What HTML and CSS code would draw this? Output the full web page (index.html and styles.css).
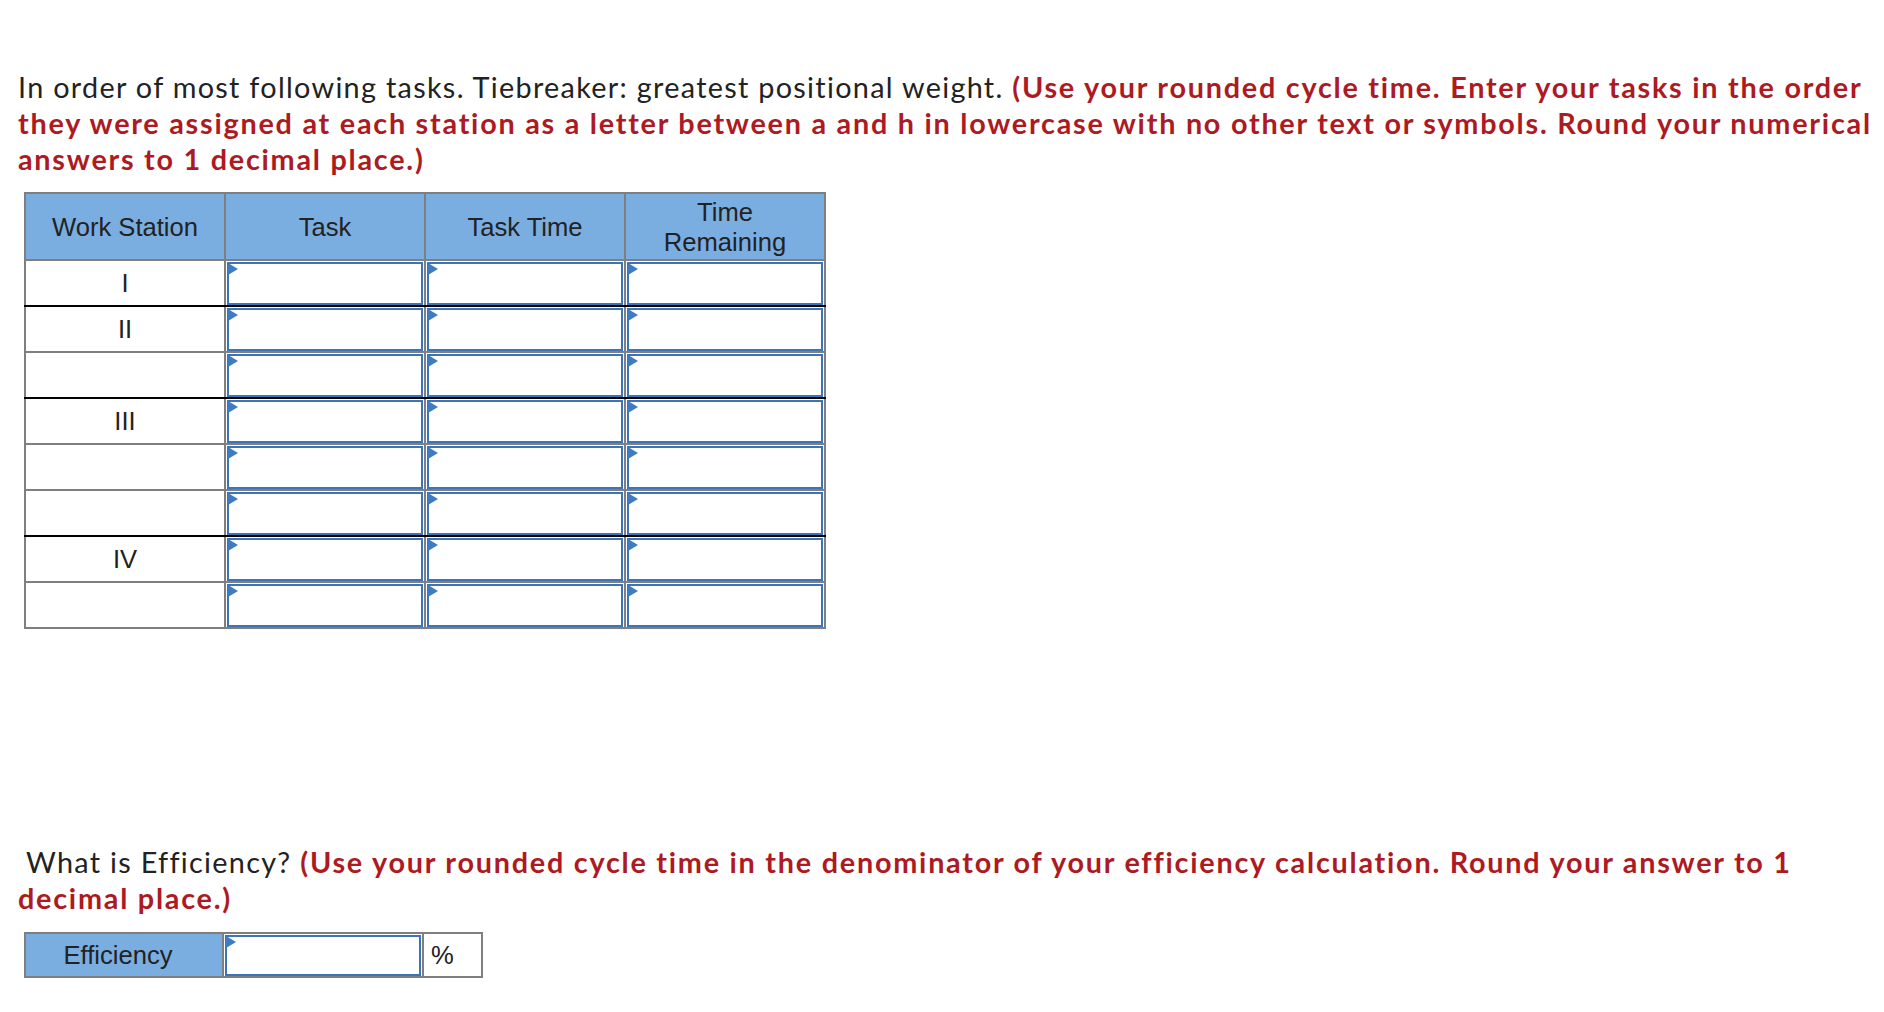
FILE: index.html
```html
<!DOCTYPE html>
<html lang="en">
<head>
<meta charset="utf-8">
<title>Line Balancing</title>
<link rel="stylesheet" href="styles.css">
</head>
<body>
<div class="page">
  <p class="prompt">In order of most following tasks. Tiebreaker: greatest positional weight. <strong class="note">(Use your rounded cycle time. Enter your tasks in the order they were assigned at each station as a letter between a and h in lowercase with no other text or symbols. Round your numerical answers to 1 decimal place.)</strong></p>

  <table class="grid">
    <thead>
      <tr>
        <th>Work Station</th>
        <th>Task</th>
        <th>Task Time</th>
        <th>Time<br>Remaining</th>
      </tr>
    </thead>
    <tbody>
      <tr class="sep">
        <td class="label">I</td>
        <td class="entry"><div class="inp"></div></td>
        <td class="entry"><div class="inp"></div></td>
        <td class="entry"><div class="inp"></div></td>
      </tr>
      <tr>
        <td class="label">II</td>
        <td class="entry"><div class="inp"></div></td>
        <td class="entry"><div class="inp"></div></td>
        <td class="entry"><div class="inp"></div></td>
      </tr>
      <tr class="sep">
        <td class="label"></td>
        <td class="entry"><div class="inp"></div></td>
        <td class="entry"><div class="inp"></div></td>
        <td class="entry"><div class="inp"></div></td>
      </tr>
      <tr>
        <td class="label">III</td>
        <td class="entry"><div class="inp"></div></td>
        <td class="entry"><div class="inp"></div></td>
        <td class="entry"><div class="inp"></div></td>
      </tr>
      <tr>
        <td class="label"></td>
        <td class="entry"><div class="inp"></div></td>
        <td class="entry"><div class="inp"></div></td>
        <td class="entry"><div class="inp"></div></td>
      </tr>
      <tr class="sep">
        <td class="label"></td>
        <td class="entry"><div class="inp"></div></td>
        <td class="entry"><div class="inp"></div></td>
        <td class="entry"><div class="inp"></div></td>
      </tr>
      <tr>
        <td class="label">IV</td>
        <td class="entry"><div class="inp"></div></td>
        <td class="entry"><div class="inp"></div></td>
        <td class="entry"><div class="inp"></div></td>
      </tr>
      <tr>
        <td class="label"></td>
        <td class="entry"><div class="inp"></div></td>
        <td class="entry"><div class="inp"></div></td>
        <td class="entry"><div class="inp"></div></td>
      </tr>
    </tbody>
  </table>

  <p class="prompt second">What is Efficiency? <strong class="note">(Use your rounded cycle time in the denominator of your efficiency calculation. Round your answer to 1 decimal place.)</strong></p>

  <table class="eff">
    <tr>
      <th class="eff-label">Efficiency</th>
      <td class="entry"><div class="inp"></div></td>
      <td class="unit">%</td>
    </tr>
  </table>
</div>
</body>
</html>
```

FILE: styles.css
```css
html, body {
  margin: 0;
  padding: 0;
  background: #ffffff;
}

.page {
  padding: 69px 4px 0 18px;
}

.prompt {
  margin: 0;
  font-family: "Lato", "Open Sans", sans-serif;
  font-size: 28.8px;
  line-height: 36px;
  letter-spacing: 1.3px;
  color: #222222;
}

.prompt.second {
  margin-top: 215px;
  text-indent: 8px;
}

.note {
  color: #ad1a22;
  font-weight: 700;
  letter-spacing: 1.75px;
}

.grid,
.eff {
  border-collapse: collapse;
  margin: 15px 0 0 6px;
  font-family: "Liberation Sans", Arial, sans-serif;
  font-size: 25.6px;
  color: #222222;
}

.eff {
  margin-top: 16px;
}

.grid th,
.grid td,
.eff th,
.eff td {
  border: 2px solid #7f7f7f;
  padding: 0;
}

.grid th {
  width: 198px;
  height: 65px;
  background: #7aaee0;
  font-weight: 400;
  line-height: 30px;
  text-align: center;
  vertical-align: middle;
}

.grid td {
  width: 198px;
  height: 44px;
}

.grid td.label {
  text-align: center;
  vertical-align: middle;
}

.grid tr.sep td {
  border-bottom-color: #000000;
}

td.entry {
  vertical-align: top;
}

.inp {
  position: relative;
  box-sizing: border-box;
  height: 43px;
  margin: 1px 1px 0 1px;
  border: 2px solid #3b74b8;
  background: #ffffff;
}

.inp::before {
  content: "";
  position: absolute;
  top: -1px;
  left: -1px;
  width: 0;
  height: 0;
  border-left: 10px solid #3d7cc2;
  border-top: 6.5px solid transparent;
  border-bottom: 6.5px solid transparent;
}

.eff th.eff-label {
  width: 198px;
  height: 42px;
  background: #7aaee0;
  font-weight: 400;
  text-align: center;
  vertical-align: middle;
  padding-right: 12px;
  box-sizing: border-box;
}

.eff td.entry {
  width: 198px;
  height: 42px;
}

.eff .inp {
  height: 41px;
}

.eff td.unit {
  width: 59px;
  height: 42px;
  padding: 0 0 0 7px;
  box-sizing: border-box;
  vertical-align: middle;
}
```
